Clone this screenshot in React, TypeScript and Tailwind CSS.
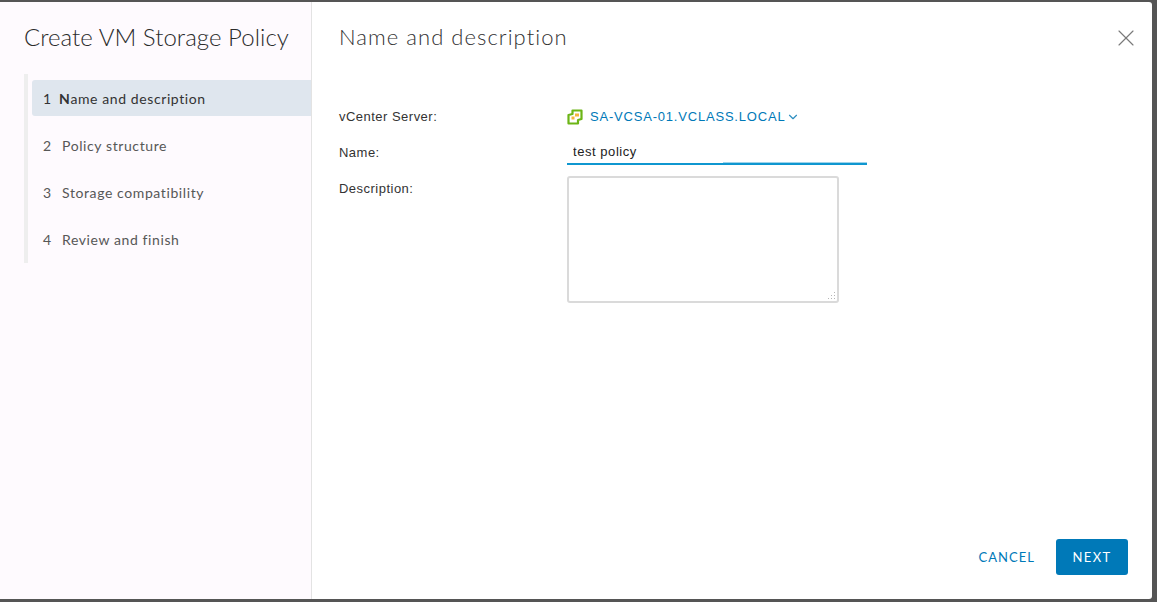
import { ChevronDown, X } from "lucide-react";

const steps = [
  { n: "1", label: "Name and description", active: true },
  { n: "2", label: "Policy structure", active: false },
  { n: "3", label: "Storage compatibility", active: false },
  { n: "4", label: "Review and finish", active: false },
];

function VCenterIcon() {
  return (
    <svg width="16" height="16" viewBox="0 0 16 16" className="shrink-0">
      <path d="M5.5 1.5h9v8.5l-3.5 1v3.5h-9.5v-8.5l4-1z" fill="#fff" stroke="#6cb516" strokeWidth="2.2" strokeLinejoin="round" />
      <rect x="8" y="4.5" width="4" height="3" fill="#f5b53a" />
      <rect x="4.5" y="7.5" width="3" height="3" fill="#f5b53a" />
    </svg>
  );
}

function ResizeGrip() {
  return (
    <svg width="10" height="8" viewBox="0 0 10 8" className="absolute right-[3px] bottom-[3px]" fill="#b5b5b5">
      <rect x="8" y="0" width="1" height="1" />
      <rect x="5" y="3" width="1" height="1" />
      <rect x="8" y="3" width="1" height="1" />
      <rect x="2" y="6" width="1" height="1" />
      <rect x="5" y="6" width="1" height="1" />
      <rect x="8" y="6" width="1" height="1" />
    </svg>
  );
}

function Wizard() {
  return (
    <div className="flex h-full rounded-[3px] bg-white">
      <aside className="w-[312px] shrink-0 border-r border-[#e3e3e3] bg-[#fefafe] pl-6 pt-[19px]">
        <h1 className="font-['Lato',sans-serif] text-[24px] leading-[32px] font-light tracking-[0.05px] text-[#2b2b2b] whitespace-nowrap">
          Create VM Storage Policy
        </h1>
        <nav className="mt-[21px] flex w-[287px] flex-col border-l-4 border-[#eeeeee] py-1.5 pl-1">
          <ul className="flex flex-col gap-[11px]">
            {steps.map((s) => (
              <li
                key={s.n}
                className={`flex h-9 items-center rounded-l-[3px] pl-[11px] font-['Lato',sans-serif] text-[14px] tracking-[0.6px] ${
                  s.active ? "bg-[#dfe6ee] text-[#333333]" : "text-[#575757]"
                }`}
              >
                <span className={s.active ? "w-4" : "w-[19px]"}>{s.n}</span>
                {s.active ? (
                  <span>
                    <b className="font-bold">N</b>ame and description
                  </span>
                ) : (
                  <span>{s.label}</span>
                )}
              </li>
            ))}
          </ul>
        </nav>
      </aside>

      <main className="relative flex min-w-0 flex-1 flex-col pl-[27px] pr-6">
        <header className="flex items-start justify-between pt-[19px]">
          <h2 className="font-['Lato',sans-serif] text-[22px] leading-[32px] font-light tracking-[1.05px] text-[#333333]">
            Name and description
          </h2>
          <button className="-mr-3 mt-[3px] text-[#7a7a7a]">
            <X size={28} strokeWidth={1} />
          </button>
        </header>

        <div className="mt-[46px] font-['Liberation_Sans',sans-serif] text-[13px] tracking-[0.48px] text-[#333333]">
          <div className="flex h-9 items-center">
            <label className="w-[228px]">vCenter Server:</label>
            <div className="flex items-center gap-[7px] text-[#0079b8]">
              <VCenterIcon />
              <span className="tracking-[0.8px]">SA-VCSA-01.VCLASS.LOCAL</span>
              <ChevronDown size={14} strokeWidth={2} className="-ml-[6px] text-[#2f8fc0]" />
            </div>
          </div>
          <div className="flex h-9 items-center">
            <label className="w-[228px]">Name:</label>
            <div className="relative self-start">
              <input
                readOnly
                value="test policy"
                className="block h-[30px] w-[300px] border-b-2 border-[#0f97d0] px-1.5 pt-[4px] text-[13px] tracking-[0.55px] text-[#222222] outline-none"
              />
              <span className="absolute right-0 bottom-[2px] left-[156px] h-px bg-[#9ed3ea]" />
            </div>
          </div>
          <div className="mt-[7px] flex items-start">
            <label className="w-[228px] pt-px">Description:</label>
            <div className="relative -mt-[2px] h-[127px] w-[272px]">
              <textarea
                readOnly
                className="block h-full w-full resize-none rounded-[3px] border-2 border-[#dadada] outline-none"
              />
              <ResizeGrip />
            </div>
          </div>
        </div>

        <footer className="mt-auto flex items-center justify-end gap-[21px] pb-[24px] font-['Lato',sans-serif] text-[13px] tracking-[1.05px]">
          <button className="pt-[2px] text-[#0079b8]">CANCEL</button>
          <button className="h-9 w-[72px] rounded-[3px] bg-[#0079b8] pt-[2px] tracking-[1.4px] text-white">NEXT</button>
        </footer>
      </main>
    </div>
  );
}

export default function App() {
  return (
    <div className="h-[602px] w-[1157px] overflow-hidden bg-[#555555] pt-[2px] pr-[5px] pb-[3px]">
      <Wizard />
    </div>
  );
}
